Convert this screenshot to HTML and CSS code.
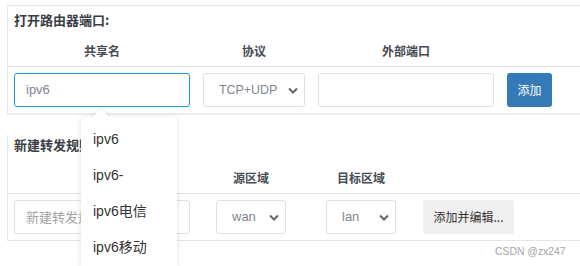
FILE: index.html
```html
<!DOCTYPE html>
<html>
<head>
<meta charset="utf-8">
<link rel="stylesheet" href="styles.css">
</head>
<body>
<div class="wrap">
  <section class="panel p1">
    <div class="title">打开路由器端口:</div>
    <div class="row head">
      <div class="c w-name">共享名</div>
      <div class="c w-proto">协议</div>
      <div class="c w-ext">外部端口</div>
    </div>
    <div class="row body">
      <div class="input w-name focus">ipv6</div>
      <div class="select w-proto"><span>TCP+UDP</span><svg width="10" height="7" viewBox="0 0 10 7"><path d="M1 1.5 L5 5.5 L9 1.5" fill="none" stroke="#666" stroke-width="2"/></svg></div>
      <div class="input w-ext"></div>
      <div class="btn primary w-add">添加</div>
    </div>
  </section>
  <section class="panel p2">
    <div class="title">新建转发规则:</div>
    <div class="row head head2">
      <div class="c w-name"></div>
      <div class="c w-zone">源区域</div>
      <div class="c w-zone">目标区域</div>
    </div>
    <div class="row body body2">
      <div class="input w-name placeholder">新建转发规则</div>
      <div class="select w-zone"><span>wan</span><svg width="10" height="7" viewBox="0 0 10 7"><path d="M1 1.5 L5 5.5 L9 1.5" fill="none" stroke="#666" stroke-width="2"/></svg></div>
      <div class="select w-zone zone2"><span>lan</span><svg width="10" height="7" viewBox="0 0 10 7"><path d="M1 1.5 L5 5.5 L9 1.5" fill="none" stroke="#666" stroke-width="2"/></svg></div>
      <div class="btn default w-edit">添加并编辑...</div>
    </div>
  </section>
  <ul class="suggest">
    <li>ipv6</li>
    <li>ipv6-</li>
    <li>ipv6电信</li>
    <li>ipv6移动</li>
  </ul>
  <div class="mark">CSDN @zx247</div>
</div>
</body>
</html>
```
FILE: styles.css
```css
html, body {
  margin: 0;
  padding: 0;
  background: #fff;
  overflow: hidden;
  width: 580px;
  height: 266px;
}
body {
  font-family: "Liberation Sans", "Noto Sans CJK SC", sans-serif;
  color: #333;
}
.wrap {
  position: relative;
  width: 580px;
  height: 266px;
  padding-top: 5px;
  padding-left: 7px;
  box-sizing: border-box;
  overflow: hidden;
}
.panel {
  width: 573px;
  box-sizing: border-box;
  border-left: 1px solid #e6e6e6;
}
.p1 {
  border-top: 1px solid #e6e6e6;
  border-bottom: 2px solid #ececec;
}
.p2 {
  border-bottom: 1px solid #e6e6e6;
}
.title {
  font-family: "Noto Sans CJK SC", sans-serif;
  font-weight: bold;
  font-size: 13px;
  line-height: 20px;
  height: 20px;
  padding-left: 6px;
  color: #3a3d44;
}
.p1 .title { margin-top: 4px; }
.p2 .title { margin-top: 20px; }
.row {
  display: flex;
  padding-left: 6px;
}
.head {
  gap: 13px;
  padding-top: 11px;
  padding-bottom: 5px;
  border-bottom: 1px solid #e2e2e2;
}
.head2 {
  gap: 0;
  padding-top: 13px;
}
.c {
  font-family: "Noto Sans CJK SC", sans-serif;
  font-weight: bold;
  font-size: 12px;
  line-height: 20px;
  height: 20px;
  text-align: center;
  color: #474b53;
}
.body {
  gap: 13px;
  padding-top: 6px;
  padding-bottom: 6px;
}
.body2 { gap: 0; }
.w-name { width: 176px; flex: none; }
.w-proto { width: 102px; flex: none; }
.w-ext { width: 176px; flex: none; }
.w-add { width: 45px; flex: none; }
.w-zone { width: 70px; flex: none; }
.w-edit { width: 91px; flex: none; }
.head2 .w-zone:nth-child(2), .body2 .w-zone { margin-left: 26px; }
.head2 .w-zone:nth-child(3), .body2 .zone2 { margin-left: 40px; }
.body2 .w-edit { margin-left: 27px; }
.input, .select {
  height: 34px;
  box-sizing: border-box;
  border: 1px solid #e0e0e0;
  border-radius: 3px;
  font-size: 13px;
  line-height: 32px;
  color: #808590;
  background: #fff;
}
.input { padding-left: 11px; }
.input.focus { border-color: #1b9ad4; }
.input.placeholder {
  font-family: "Noto Sans CJK SC", sans-serif;
  color: #a3a3a3;
  white-space: nowrap;
  overflow: hidden;
}
.select {
  display: flex;
  align-items: center;
  justify-content: space-between;
  padding-left: 15px;
  padding-right: 6px;
}
.select span { line-height: 32px; }
.w-proto span { font-size: 12.4px; }
.select svg { display: block; flex: none; }
.btn {
  height: 34px;
  box-sizing: border-box;
  border-radius: 3px;
  font-family: "Noto Sans CJK SC", sans-serif;
  font-size: 12px;
  line-height: 34px;
  text-align: center;
}
.primary { background: #337ab7; color: #fff; }
.default { background: #efefef; color: #333; }
.suggest {
  position: absolute;
  left: 81px;
  top: 117px;
  width: 96px;
  height: 149px;
  margin: 0;
  padding: 4px 0 0 0;
  list-style: none;
  background: #fff;
  border-radius: 4px 4px 0 0;
  box-shadow: 0 1px 6px rgba(0, 0, 0, 0.13);
  box-sizing: border-box;
}
.suggest::before {
  content: "";
  position: absolute;
  left: 14px;
  top: -6px;
  width: 12px;
  height: 12px;
  background: #fff;
  transform: rotate(45deg);
  box-shadow: -1px -1px 2px rgba(0, 0, 0, 0.08);
}
.suggest li {
  position: relative;
  height: 36px;
  line-height: 36px;
  padding-left: 12px;
  font-size: 14px;
  color: #333;
}
.mark {
  position: absolute;
  left: 495px;
  top: 246px;
  font-size: 10.4px;
  line-height: 12px;
  color: #a5a5a5;
}
```
